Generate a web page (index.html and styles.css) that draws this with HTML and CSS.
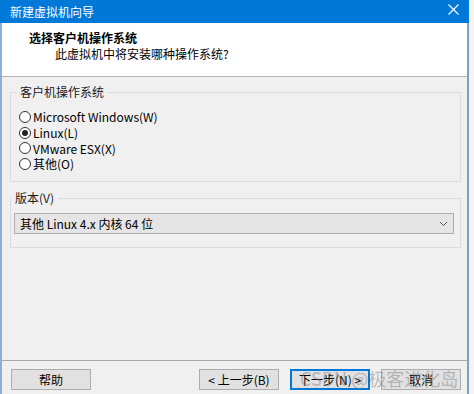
FILE: index.html
```html
<!DOCTYPE html>
<html lang="zh-CN">
<head>
  <meta charset="UTF-8">
  <title>新建虚拟机向导</title>
  <link rel="stylesheet" href="styles.css">
</head>
<body>
  <div id="window">
    <div class="titlebar">
      <span class="title">新建虚拟机向导</span>
      <svg class="close" width="11" height="11" viewBox="0 0 11 11">
        <path d="M0.5 0.5 L10.5 10.5 M10.5 0.5 L0.5 10.5" stroke="#fff" stroke-width="1.2" fill="none"/>
      </svg>
    </div>
    <div class="frame">
      <div class="header">
        <div class="heading">选择客户机操作系统</div>
        <div class="subheading">此虚拟机中将安装哪种操作系统?</div>
      </div>
      <div class="body">
        <fieldset class="group group_os">
          <legend>客户机操作系统</legend>
          <label class="radio"><span class="dot"></span>Microsoft Windows(W)</label>
          <label class="radio"><span class="dot dot--on"></span>Linux(L)</label>
          <label class="radio"><span class="dot"></span>VMware ESX(X)</label>
          <label class="radio"><span class="dot"></span>其他(O)</label>
        </fieldset>
        <fieldset class="group group_ver">
          <legend>版本(V)</legend>
          <div class="select">
            <span>其他 Linux 4.x 内核 64 位</span>
            <svg width="9" height="6" viewBox="0 0 9 6">
              <path d="M1 1 L4.5 4.5 L8 1" stroke="#555" stroke-width="1" fill="none"/>
            </svg>
          </div>
        </fieldset>
      </div>
      <div class="footer">
        <div class="btn">帮助</div>
        <div class="spacer"></div>
        <div class="btn">&lt; 上一步(B)</div>
        <div class="btn btn--default">下一步(N) &gt;</div>
        <div class="btn">取消</div>
      </div>
    </div>
    <div class="watermark">CSDN @极客进化岛</div>
  </div>
</body>
</html>
```

FILE: styles.css
```css
* {
  padding: 0;
  margin: 0;
  box-sizing: border-box;
}
body {
  background: #f4f4f4;
  font-family: "Noto Sans CJK SC", "Noto Sans", sans-serif;
  font-size: 12px;
  color: #000;
}
#window {
  position: relative;
  width: 469px;
  height: 394px;
  display: flex;
  flex-direction: column;
}
.titlebar {
  height: 23px;
  background: #0078d7;
  color: #fff;
  display: flex;
  align-items: center;
  padding: 0 10px 0 10px;
}
.title {
  flex: 1 1 auto;
  line-height: 16px;
}
.close {
  margin-top: -4px;
  margin-right: 0;
}
.frame {
  flex: 1 1 auto;
  display: flex;
  flex-direction: column;
  background: #f0f0f0;
  border-left: 2px solid #8eaed3;
  border-right: 2px solid #7f9fc4;
}
.header {
  height: 54px;
  background: #fff;
  border-bottom: 1px solid #b4b4b4;
  padding: 7px 0 0 27px;
  line-height: 16px;
}
.heading {
  font-weight: bold;
}
.subheading {
  padding-left: 26px;
}
.body {
  flex: 1 1 auto;
  padding: 7px 6px 0 8px;
}
.group {
  border: 1px solid #dcdcdc;
  padding: 0 8px;
}
.group legend {
  margin-left: -2px;
  padding: 0 4px 0 3px;
  line-height: 16px;
  color: #1a1a1a;
}
.group_os {
  height: 98px;
  padding-top: 9px;
}
.group_ver {
  height: 58px;
  margin-top: 8px;
  padding: 7px 6px 0 3px;
}
.radio {
  display: flex;
  align-items: center;
  height: 15.7px;
  gap: 2px;
}
.dot {
  width: 12px;
  height: 12px;
  border: 1px solid #333;
  border-radius: 50%;
  background: #fff;
  display: flex;
  align-items: center;
  justify-content: center;
}
.dot--on::after {
  content: "";
  width: 6px;
  height: 6px;
  border-radius: 50%;
  background: #222;
}
.select {
  height: 21px;
  background: #e5e5e5;
  border: 1px solid #adadad;
  display: flex;
  align-items: center;
  justify-content: space-between;
  padding: 0 5px 0 5px;
}
.footer {
  height: 34px;
  border-top: 1px solid #a8a8a8;
  display: flex;
  align-items: flex-start;
  padding: 8px 6px 0 9px;
  gap: 11px;
}
.spacer {
  flex: 1 1 auto;
}
.btn {
  width: 80px;
  height: 21px;
  background: #e1e1e1;
  border: 1px solid #adadad;
  display: flex;
  align-items: center;
  justify-content: center;
  line-height: 16px;
}
.btn--default {
  border: 2px solid #0078d7;
}
.watermark {
  position: absolute;
  left: 300px;
  top: 367px;
  font-size: 18px;
  line-height: 22px;
  color: rgba(120, 120, 120, 0.45);
  letter-spacing: 0;
  white-space: nowrap;
}
```
